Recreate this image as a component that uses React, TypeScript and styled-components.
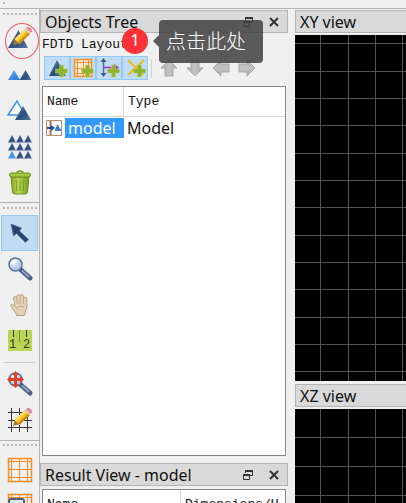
import React from "react";
import styled, { createGlobalStyle } from "styled-components";

const ui = `"Noto Sans", "Noto Sans CJK SC", sans-serif`;
const mono = `"Liberation Mono", monospace`;

const Global = createGlobalStyle`
  *, *::before, *::after { box-sizing: border-box; }
  html, body, #root { height: 100%; margin: 0; }
  body { background: #f0f0f0; color: #111; overflow: hidden; font: 16px/20px ${ui}; }
`;

const Window = styled.div`
  height: 100vh;
  display: flex;
  flex-direction: column;
  overflow: hidden;
`;
const TopBar = styled.div`
  flex: none;
  height: 9px;
  padding: 2px 3px;
  border-bottom: 1px solid #b4b4b4;
`;
const Dot = styled.i`
  display: block;
  width: 2px;
  height: 2px;
  background: #b8b8b8;
`;
const Body = styled.div`
  flex: 1;
  min-height: 0;
  display: flex;
`;
const Toolbar = styled.nav`
  flex: none;
  width: 40px;
  display: flex;
  flex-direction: column;
  border-right: 1px solid #b4b4b4;
`;
const ToolGroup = styled.div<{ $top: number; $bottom: number; $last?: boolean }>`
  flex: none;
  display: flex;
  flex-direction: column;
  padding: ${(p) => p.$top}px 1px ${(p) => p.$bottom}px;
  border-bottom: ${(p) => (p.$last ? 0 : 1)}px solid #b4b4b4;
`;
const Grip = styled.div`
  flex: none;
  height: 2px;
  margin: 0 0 6px 2px;
  background: repeating-linear-gradient(90deg, #bbb 0 2px, transparent 2px 4px);
`;
const ToolButton = styled.button<{ $active?: boolean }>`
  display: grid;
  place-items: center;
  flex: none;
  width: 37px;
  height: 36px;
  padding: 0;
  border: 1px solid ${(p) => (p.$active ? "#91c9f7" : "transparent")};
  background: ${(p) => (p.$active ? "#c0dcf3" : "transparent")};
  position: relative;
`;
const Ring = styled.span`
  position: absolute;
  inset: 1px -2px -3px 3px;
  border: 1px solid #f25a5f;
  border-radius: 50%;
`;
const ToolDivider = styled.hr`
  width: 31px;
  margin: 3px 0 3px 3px;
  border: 0;
  border-top: 1px solid #cfcfcf;
`;
const Dock = styled.section`
  flex: none;
  width: 248px;
  display: flex;
  flex-direction: column;
  padding-top: 1px;
`;
const TitleBar = styled.header`
  flex: none;
  height: 23px;
  display: flex;
  align-items: center;
  padding-left: 4px;
  border: 1px solid #b4b4b4;
  background: #d9d9d9;
`;
const Title = styled.h2`
  flex: 1;
  margin: 0;
  font: 400 16px/20px ${ui};
  white-space: nowrap;
`;
const TitleButton = styled.button`
  display: grid;
  place-items: center;
  width: 26px;
  height: 20px;
  padding: 0;
  border: 0;
  background: none;
`;
const ModeArea = styled.div`
  position: relative;
  padding: 2px 2px 0;
`;
const ModeText = styled.p`
  margin: 0;
  font: 13px/20px ${mono};
  white-space: nowrap;
`;
const ActionRow = styled.div`
  display: flex;
  align-items: center;
  height: 24px;
  margin: 1px 0 6px 2px;
`;
const AddButton = styled.button`
  display: grid;
  place-items: center;
  width: 26px;
  height: 24px;
  padding: 0;
  border: 1px solid #91c9f7;
  background: #c0dcf3;
`;
const Rule = styled.i`
  width: 1px;
  height: 19px;
  margin: 0 4px 0 3px;
  background: #d0d0d0;
`;
const ArrowButton = styled.button`
  display: grid;
  place-items: center;
  width: 26px;
  height: 24px;
  padding: 0;
  border: 0;
  background: none;
`;
const Step = styled.span`
  position: absolute;
  left: 82px;
  top: -5px;
  width: 26px;
  height: 26px;
  border-radius: 50%;
  background: #fb3237;
  color: #fff;
  text-align: center;
  font: 16px/24px ${ui};
`;
const Tip = styled.div`
  position: absolute;
  z-index: 2;
  left: 119px;
  top: -13px;
  width: 104px;
  height: 43px;
  padding-left: 7px;
  border-radius: 4px;
  background: rgba(64, 64, 64, 0.85);
  color: #fff;
  white-space: nowrap;
  font: 300 20px/42px "Noto Sans CJK SC", sans-serif;
  &::before {
    content: "";
    position: absolute;
    left: -6px;
    top: 15px;
    border: 6px solid transparent;
    border-left: 0;
    border-right-color: rgba(64, 64, 64, 0.85);
  }
`;
const Frame = styled.div<{ $grow?: boolean }>`
  flex: ${(p) => (p.$grow ? "1 1 0" : "none")};
  min-height: 0;
  margin: 0 2px;
  border: 1px solid #828790;
  background: #fff;
  overflow: hidden;
`;
const Table = styled.table`
  width: 100%;
  border-collapse: separate;
  border-spacing: 0;
  table-layout: fixed;
`;
const Head = styled.th<{ $w?: number }>`
  width: ${(p) => (p.$w ? p.$w + "px" : "auto")};
  height: 30px;
  padding: 1px 0 0 4px;
  border-bottom: 1px solid #d5d5d5;
  border-right: ${(p) => (p.$w ? 1 : 0)}px solid #d5d5d5;
  text-align: left;
  white-space: nowrap;
  font: 400 13px/20px ${mono};
`;
const Cell = styled.td`
  height: 22px;
  padding: 1px 0 1px 3px;
  vertical-align: middle;
`;
const NameCell = styled.div`
  display: flex;
  align-items: center;
  gap: 3px;
`;
const Selected = styled.span`
  flex: 1;
  height: 20px;
  padding-left: 3px;
  background: #3399ff;
  color: #fff;
`;
const Lower = styled.div`
  flex: none;
  height: 47px;
  padding-top: 7px;
  overflow: hidden;
  & > ${TitleBar} { margin-bottom: 3px; }
`;
const Views = styled.main`
  flex: 1;
  min-width: 0;
  display: flex;
  flex-direction: column;
  margin-left: 7px;
  padding-top: 1px;
  & > ${TitleBar} { border-right: 0; }
`;
const Canvas = styled.svg<{ $grow?: boolean }>`
  display: block;
  width: 100%;
  min-height: 0;
  flex: ${(p) => (p.$grow ? "1 1 0" : "0 0 94px")};
  margin: ${(p) => (p.$grow ? "2px 0 3px" : "2px 0 0")};
  background: #000;
`;
const SharedPaints = styled.svg`
  position: absolute;
`;

const Svg = ({ w = 26, h = w, children }: { w?: number; h?: number; children: React.ReactNode }) => (
  <svg width={w} height={h} viewBox={`0 0 ${w} ${h}`} fill="none" aria-hidden="true">{children}</svg>
);
const Defs = () => (
  <SharedPaints width="0" height="0" aria-hidden="true">
    <defs>
      <linearGradient id="navy" x1="0" y1="0" x2="1" y2="1">
        <stop stopColor="#698abe" /><stop offset=".55" stopColor="#2d4e7b" /><stop offset="1" stopColor="#5876a1" />
      </linearGradient>
      <linearGradient id="sky" x1="0" y1="0" x2="1" y2="1">
        <stop stopColor="#65b5fb" /><stop offset="1" stopColor="#2870d2" />
      </linearGradient>
      <linearGradient id="lime"><stop stopColor="#82a91f" /><stop offset=".4" stopColor="#b9d450" /><stop offset="1" stopColor="#789d20" /></linearGradient>
      <linearGradient id="grey"><stop stopColor="#a9a9a9" /><stop offset=".5" stopColor="#c4c4c4" /><stop offset="1" stopColor="#aaa" /></linearGradient>
      <radialGradient id="glass" cx=".35" cy=".3"><stop stopColor="#fff" /><stop offset="1" stopColor="#b5cbec" /></radialGradient>
    </defs>
  </SharedPaints>
);
const Pencil = () => (
  <g>
    <path d="m6 19 2-7 5 5z" fill="#a17a35" />
    <path d="M7.500 13 18 3l5 5-10.500 10z" fill="#f5b91a" />
    <path d="M7.500 13 18 3l2 2L9.500 15z" fill="#ffdb57" />
    <path d="m11 16.500 10.500-10L23 8 12.500 18z" fill="#c98a12" />
    <path d="m19 2 1.500-1c1.500-1 5.500 2.500 4.500 4.500L23.500 7z" fill="#e58b9c" />
    <path d="m17.500 3.500 1.500-1.500L23.500 7 22 8z" fill="#d5cfc2" />
  </g>
);
const EditIcon = () => <Svg><path d="M11.500 4 21 22H1z" fill="url(#navy)" /><Pencil /></Svg>;
const PairIcon = () => <Svg><path d="M7 8l6 10H1z" fill="url(#sky)" /><path d="m18.500 8 6 10H12.500z" fill="url(#navy)" /></Svg>;
const OverlapIcon = () => (
  <Svg><path d="M10 3 18 17H1z" fill="#fff" stroke="#3d91e5" strokeWidth="1.500" /><path d="M16 8 24 22H8z" fill="url(#navy)" /></Svg>
);
const ArrayIcon = () => (
  <Svg>
    {[0, 1, 2].flatMap((r) => [0, 1, 2].map((c) => (
      <path key={`${r}${c}`} d={`M${5 + c * 8} ${1 + r * 8}l4 7.500h-8z`} fill={r === 2 && c === 0 ? "#4494f7" : "url(#navy)"} />
    )))}
  </Svg>
);
const TrashIcon = () => (
  <Svg>
    <path d="M4 7h18l-1.500 15q0 2-3 2h-9q-3 0-3-2z" fill="url(#lime)" stroke="#6c8f20" />
    <path d="M9.500 10v11M13 10v11M16.500 10v11" stroke="#7d9f2d" />
    <path d="M10 3q0-2 3-2t3 2" stroke="#73962b" strokeWidth="1.500" />
    <rect x="2.500" y="3" width="21" height="4" rx="2" fill="#a4c83c" stroke="#6c8f20" />
  </Svg>
);
const PointerIcon = () => <Svg><path d="m4 4 10.500 4-2 3 9 8.500-3 3-9-9-3 2.500z" fill="#27446f" stroke="#54709b" strokeWidth=".7" /></Svg>;
const Lens = () => (
  <g>
    <path d="m14 14 9 8" stroke="#4a6285" strokeWidth="5" strokeLinecap="round" />
    <path d="m15 14.500 7 6.500" stroke="#8ea5c2" strokeWidth="2" />
    <circle cx="8.500" cy="8.500" r="6.500" fill="url(#glass)" stroke="#5b759b" strokeWidth="1.500" />
  </g>
);
const ZoomIcon = () => <Svg><Lens /></Svg>;
const ExtentIcon = () => (
  <Svg><Lens /><path d="M8.500 0 12 4H10v3h3V5l4 3.500-4 3.500v-2h-3v3h2l-3.500 4L5 13h2v-3H4v2L0 8.500 4 5v2h3V4H5z" fill="#dc4328" /></Svg>
);
const HandIcon = () => (
  <Svg>
    <path d="M9.500 23.500c0-3-4-6-5.500-9-1-2 1-3 2.500-1.500L8 14.500 6.500 6c0-2 2.500-2 3 0L10 4c0-2 3-2 3.200 0 .3-2 3-2 3.300 0l.2 2c.5-1.500 3-1.200 3 .5 0 3 .5 6 0 9-.4 3-1.700 4-2.200 8z" fill="#e6d0b4" stroke="#a8927c" strokeWidth=".8" />
    <path d="m9.500 6 1 6M13.200 4v8M16.700 6l-.5 6M9 16q4-3 8-1" stroke="#b7a189" strokeWidth=".8" />
  </Svg>
);
const RulerIcon = () => (
  <Svg>
    <rect x="1" y="2" width="24" height="21" fill="#b8d556" />
    <path d="M6.500 2v7M19.500 2v7" stroke="#2a3d40" /><path d="M12.500 2v12" stroke="#728b3a" />
    <text x="2" y="20" fontFamily="Liberation Mono" fontSize="12" fill="#334420">1</text>
    <text x="16" y="20" fontFamily="Liberation Mono" fontSize="12" fill="#334420">2</text>
  </Svg>
);
const GridPencilIcon = () => (
  <Svg><path d="M4.500 1v24M12.500 1v24M20.500 1v24M1 5.500h24M1 13.500h24M1 20.500h24" stroke="#38383c" /><Pencil /></Svg>
);
const Mesh = () => (
  <g stroke="#f98c22" strokeWidth="1">
    <path d="M1.500 1.500h23v23h-23z" strokeWidth="1.500" /><path d="M4.500 1v24M12.500 1v24M20.500 1v24M1 4.500h24M1 12.500h24M1 20.500h24" />
  </g>
);
const MeshIcon = () => <Svg><Mesh /></Svg>;
const MonitorIcon = () => (
  <Svg><Mesh /><rect x="2" y="6" width="15" height="14" rx="2" fill="#dfe6ee" stroke="#4b6185" strokeWidth="2" /></Svg>
);
const Plus = () => <path d="M13.500 8h4v4h4v4h-4v4h-4v-4h-4v-4h4z" fill="#8fb32d" stroke="#b9cf77" strokeWidth=".5" />;
const AddIcons: [string, React.ReactNode][] = [
  ["Add structure", <path key="a" d="M11 3 20 19H3z" fill="url(#navy)" />],
  ["Add simulation", <g key="b" stroke="#f79232"><path d="M2.500 2.500h17v17h-17z" fill="#fbe8d2" strokeWidth="1.500" /><path d="M5.500 2v18M11.500 2v18M16.500 2v18M2 5.500h18M2 11.500h18M2 16.500h18" /></g>],
  ["Add source", <g key="c"><path d="M5.500 4v14" stroke="#526c9c" strokeWidth="1.500" /><path d="m5.500 1 3 4h-6zM5.500 20l3-4h-6z" fill="#405b8c" /><path d="M6 10.500h11" stroke="#a52ad0" strokeWidth="1.500" /><path d="m16 7 5 3.500-5 3.500z" fill="#a52ad0" /></g>],
  ["Add monitor", <path key="d" d="m4 3 15 15M4 18 20 3" stroke="#e7bd16" strokeWidth="2" />],
];
const FloatIcon = () => (
  <Svg w={12}><path d="M3.500 4V1.500h7v5H8" stroke="#333" /><path d="M3 2h8" stroke="#333" strokeWidth="2" /><path d="M1.500 5.500h6v5h-6z" fill="#ddd" stroke="#333" /><path d="M1 6h7" stroke="#333" strokeWidth="2" /></Svg>
);
const CloseIcon = () => <Svg w={12}><path d="m2 2 8 8M10 2l-8 8" stroke="#333" strokeWidth="2" /></Svg>;
const ModelIcon = () => (
  <Svg w={16}>
    <path d="M.5.5h15v15H.5z" fill="#fff" stroke="#b68a6b" /><path d="M4.500 1v14" stroke="#b86b60" strokeWidth="2" />
    <path d="M1 8h6" stroke="#174f94" strokeWidth="2" /><path d="m5 5 4 3-4 3z" fill="#174f94" /><path d="m11.500 4 4 7h-7z" fill="#347dca" />
  </Svg>
);

const DockTitle = ({ text }: { text: string }) => (
  <TitleBar>
    <Title>{text}</Title>
    <TitleButton aria-label="Float"><FloatIcon /></TitleButton>
    <TitleButton aria-label="Close"><CloseIcon /></TitleButton>
  </TitleBar>
);
const columns = [25, 53, 80, 107];
const GridView = ({ rows, grow }: { rows: number[]; grow?: boolean }) => (
  <Canvas $grow={grow} aria-hidden="true">
    {columns.map((x) => <rect key={x} x={x} y="0" width="1" height="100%" fill="#555" />)}
    {rows.map((y) => <rect key={y} x="0" y={y} width="100%" height="1" fill="#555" />)}
  </Canvas>
);

export default function App() {
  return (
    <Window>
      <Global />
      <Defs />
      <TopBar><Dot /></TopBar>
      <Body>
        <Toolbar aria-label="Tools">
          <ToolGroup $top={4} $bottom={1}>
            <Grip />
            <ToolButton aria-label="Edit"><EditIcon /><Ring /></ToolButton>
            <ToolButton aria-label="Duplicate"><PairIcon /></ToolButton>
            <ToolButton aria-label="Transform"><OverlapIcon /></ToolButton>
            <ToolButton aria-label="Array"><ArrayIcon /></ToolButton>
            <ToolButton aria-label="Delete"><TrashIcon /></ToolButton>
          </ToolGroup>
          <ToolGroup $top={4} $bottom={2}>
            <Grip />
            <ToolButton $active aria-label="Select"><PointerIcon /></ToolButton>
            <ToolButton aria-label="Zoom"><ZoomIcon /></ToolButton>
            <ToolButton aria-label="Pan"><HandIcon /></ToolButton>
            <ToolButton aria-label="Ruler"><RulerIcon /></ToolButton>
            <ToolDivider />
            <ToolButton aria-label="Zoom extent"><ExtentIcon /></ToolButton>
            <ToolButton aria-label="Edit grid"><GridPencilIcon /></ToolButton>
          </ToolGroup>
          <ToolGroup $top={3} $bottom={0} $last>
            <Grip />
            <ToolButton aria-label="Mesh"><MeshIcon /></ToolButton>
            <ToolButton aria-label="Monitor"><MonitorIcon /></ToolButton>
          </ToolGroup>
        </Toolbar>
        <Dock>
          <DockTitle text="Objects Tree" />
          <ModeArea>
            <ModeText>FDTD Layout</ModeText>
            <Step>1</Step>
            <Tip role="tooltip">点击此处</Tip>
            <ActionRow>
              {AddIcons.map(([label, art]) => (
                <AddButton key={label} aria-label={label}><Svg w={22}>{art}<Plus /></Svg></AddButton>
              ))}
              <Rule />
              {[["up", 0], ["down", 180], ["left", 270], ["right", 90]].map(([label, turn]) => (
                <ArrowButton key={label} aria-label={`Move ${label}`}>
                  <Svg w={18}><path transform={`rotate(${turn} 9 9)`} d="m9 1 8 8h-4v8H5V9H1z" fill="url(#grey)" stroke="#aaa" /></Svg>
                </ArrowButton>
              ))}
            </ActionRow>
          </ModeArea>
          <Frame $grow>
            <Table>
              <thead><tr><Head $w={81}>Name</Head><Head>Type</Head></tr></thead>
              <tbody>
                <tr>
                  <Cell><NameCell><ModelIcon /><Selected>model</Selected></NameCell></Cell>
                  <Cell>Model</Cell>
                </tr>
              </tbody>
            </Table>
          </Frame>
          <Lower>
            <DockTitle text="Result View - model" />
            <Frame>
              <Table><thead><tr><Head $w={138}>Name</Head><Head>Dimensions/U</Head></tr></thead></Table>
            </Frame>
          </Lower>
        </Dock>
        <Views>
          <TitleBar><Title>XY view</Title></TitleBar>
          <GridView grow rows={[8, 36, 63, 90, 118, 145, 172, 200, 227, 254, 282, 309, 336]} />
          <TitleBar><Title>XZ view</Title></TitleBar>
          <GridView rows={[28, 57, 86]} />
        </Views>
      </Body>
    </Window>
  );
}
